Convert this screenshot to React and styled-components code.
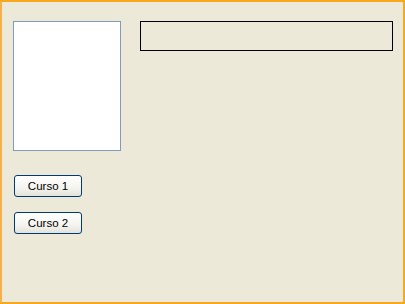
import React from "react";
import styled, { createGlobalStyle } from "styled-components";

const Global = createGlobalStyle`
  html, body { margin: 0; padding: 0; background: #ECE9D8; }
  * { box-sizing: border-box; }
`;

const Frame = styled.div`
  width: 405px;
  height: 304px;
  border: 2px solid #F8A81F;
  border-left-color: #F4B04A;
  background: #ECE9D8;
  display: flex;
  align-items: flex-start;
  padding: 19px 0 0 11px;
  font-family: Tahoma, "DejaVu Sans", "Liberation Sans", sans-serif;
`;

const LeftColumn = styled.div`
  display: flex;
  flex-direction: column;
  align-items: flex-start;
`;

const ListBox = styled.div`
  width: 108px;
  height: 130px;
  background: #fff;
  border: 1px solid #7F9DB9;
`;

const Button = styled.button`
  width: 68px;
  height: 22px;
  margin-left: 1px;
  margin-top: ${(p) => p.$gap}px;
  padding: 0;
  border: 1px solid #003C74;
  border-radius: 3px;
  background: linear-gradient(#FFFFFF 0%, #F5F4EF 60%, #E3E2DA 100%);
  font-family: "Liberation Sans", Arial, sans-serif;
  font-size: 11.5px;
  color: #000;
  line-height: 20px;
  text-align: center;
`;

const TextField = styled.div`
  margin-left: 19px;
  width: 253px;
  height: 30px;
  border: 1px solid #000;
  background: #ECE9D8;
`;

export default function App() {
  return (
    <>
      <Global />
      <Frame>
        <LeftColumn>
          <ListBox />
          <Button $gap={24}>Curso 1</Button>
          <Button $gap={15}>Curso 2</Button>
        </LeftColumn>
        <TextField />
      </Frame>
    </>
  );
}
